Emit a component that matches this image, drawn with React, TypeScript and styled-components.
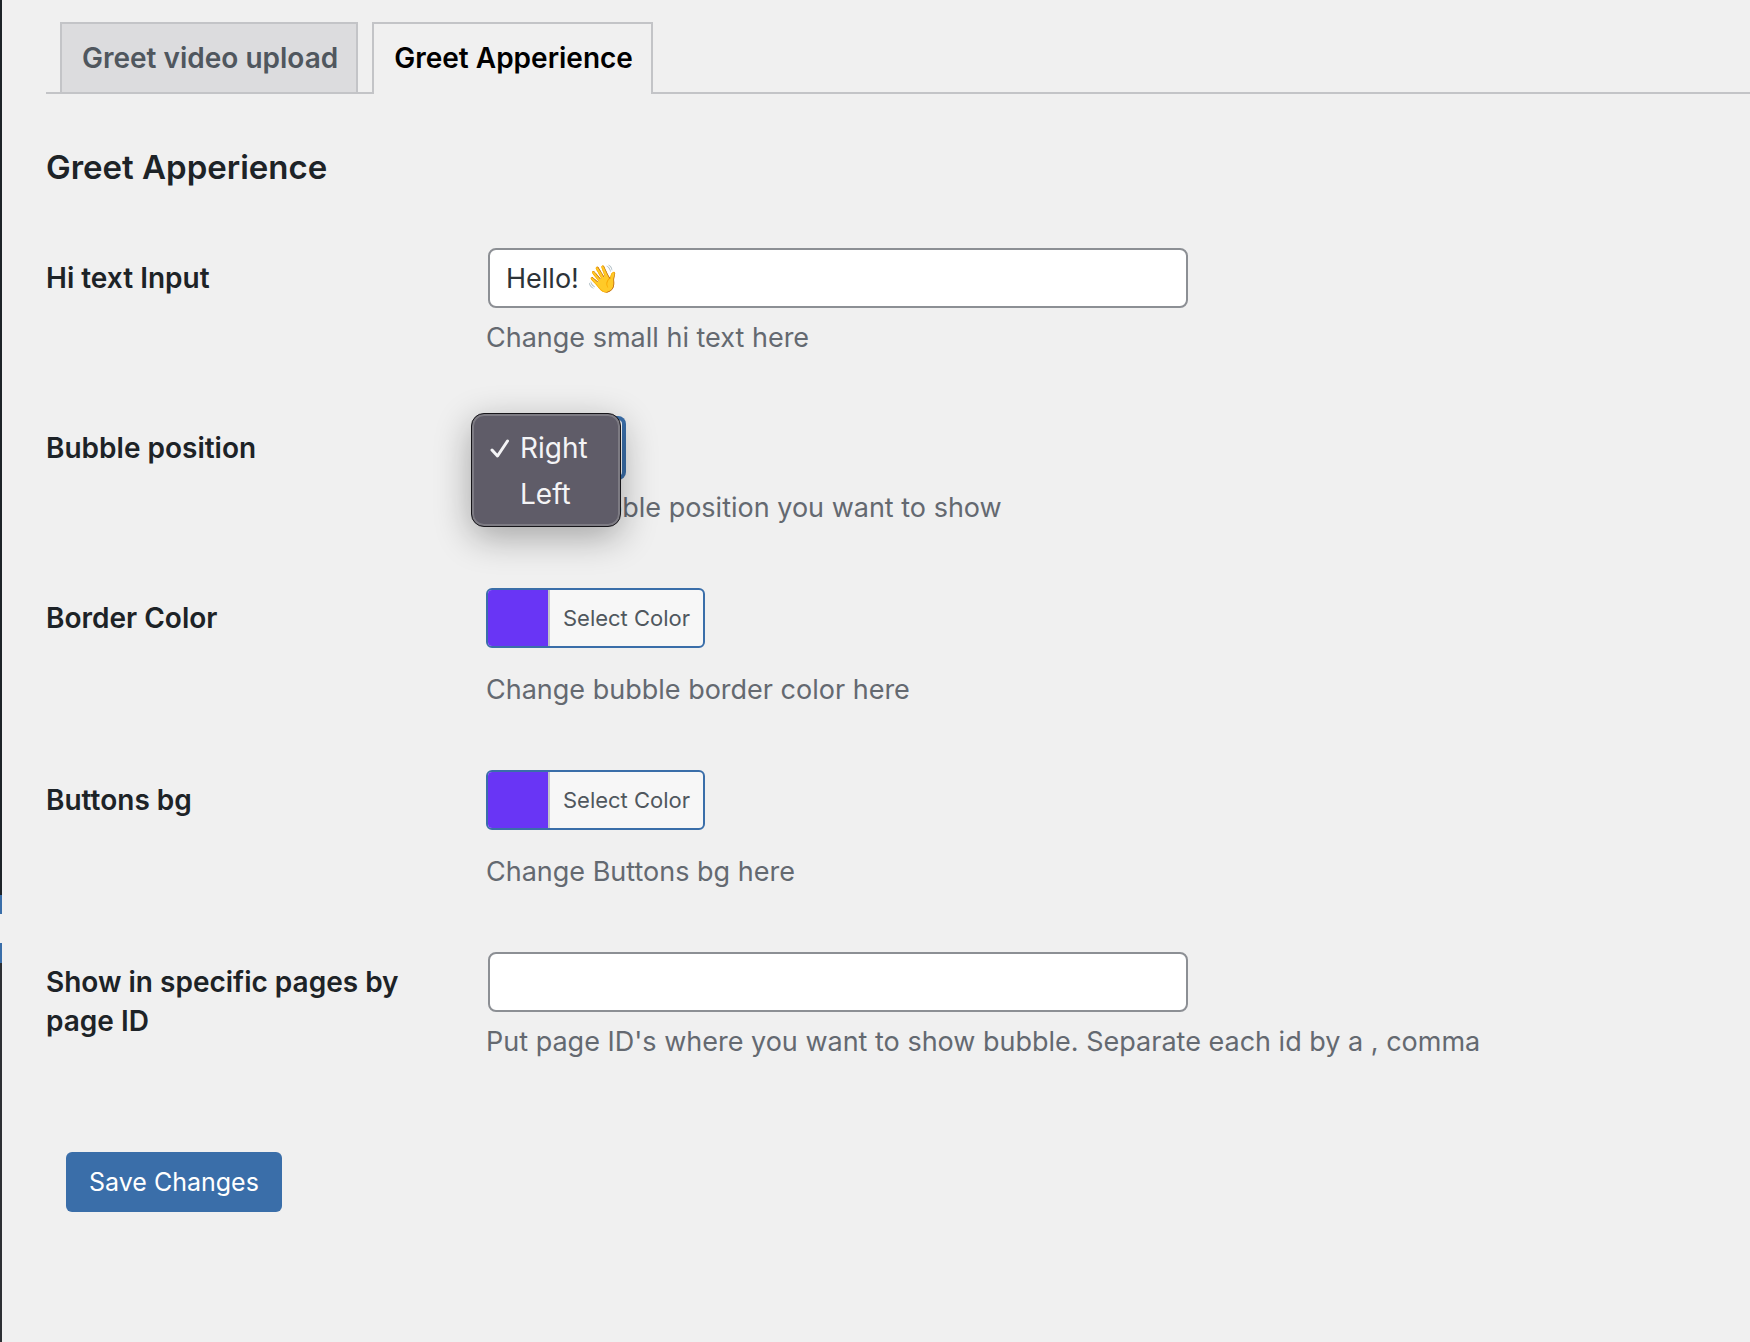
import React, { useState } from "react";
import styled, { createGlobalStyle, css } from "styled-components";

const GlobalStyle = createGlobalStyle`
  *, *::before, *::after { box-sizing: border-box; }
  body {
    margin: 0;
    background: #f0f0f0;
    color: #1d2327;
    font-family: Inter, "Liberation Sans", sans-serif;
    font-size: 27px;
    line-height: 39px;
  }
  input, select, button { font: inherit; }
`;

const Shell = styled.div`
  display: flex;
  min-height: 100vh;
`;

const MenuEdge = styled.div`
  display: grid;
  flex: none;
  width: 2px;
  grid-template-rows: 895px 19px 29px 20px 1fr;
`;

const EdgePart = styled.span<{ $tone: string }>`
  background: ${(p) => p.$tone};
`;

const Content = styled.main`
  flex: 1;
  min-width: 0;
  padding: 22px 0 40px 44px;
`;

const Tabs = styled.nav`
  display: flex;
  gap: 14px;
  padding-left: 14px;
  border-bottom: 2px solid #c3c4c7;
`;

const Tab = styled.a<{ $active?: boolean }>`
  padding: 10px 18px 10px 20px;
  border: 2px solid #c3c4c7;
  border-bottom: 0;
  background: #dcdcde;
  color: #50575e;
  font-size: 28px;
  font-weight: 600;
  line-height: 48px;
  text-decoration: none;
  ${(p) =>
    p.$active &&
    css`
      margin-bottom: -2px;
      padding-bottom: 12px;
      background: #f0f0f0;
      color: #000;
    `}
`;

const Title = styled.h2`
  margin: 50px 0 26px;
  font-size: 33px;
  font-weight: 600;
  line-height: 46px;
`;

const Row = styled.div`
  display: grid;
  grid-template-columns: 400px minmax(0, 1fr);
  column-gap: 40px;
  padding: 30px 20px 27px 0;
`;

const Label = styled.label`
  padding: 13px 20px 0 0;
  font-size: 28px;
  font-weight: 600;
`;

const TextInput = styled.input`
  display: block;
  width: 700px;
  max-width: 100%;
  height: 60px;
  margin: 2px;
  padding: 0 16px;
  border: 2px solid #8c8f94;
  border-radius: 8px;
  background: #fff;
  color: #2c3338;
  outline: none;
`;

const Help = styled.p<{ $spaced?: boolean }>`
  margin: ${(p) => (p.$spaced ? 21 : 9)}px 0 0;
  color: #646970;
  line-height: 42px;
`;

const SelectWrap = styled.div`
  position: relative;
  width: max-content;
`;

const Select = styled.select`
  display: block;
  width: 136px;
  height: 60px;
  margin: 2px;
  padding: 0 16px;
  appearance: none;
  border: 2px solid #3a6ea9;
  border-radius: 6px;
  background: #fff;
  box-shadow: 0 0 0 2px #3a6ea9;
  color: #2c3338;
  outline: none;
`;

const Menu = styled.div`
  position: absolute;
  top: -5px;
  left: -15px;
  width: 150px;
  padding: 11px 6px 9px;
  border: 1px solid #17161a;
  border-radius: 13px;
  background: #5f5c68;
  box-shadow: inset 0 0 0 2px #7d7b83, 0 10px 36px rgba(0, 0, 0, 0.32);
`;

const Option = styled.button`
  display: grid;
  grid-template-columns: 30px 1fr;
  align-items: center;
  width: 100%;
  height: 46px;
  padding: 0 0 0 12px;
  border: 0;
  background: none;
  color: #f4f4f6;
  font-size: 28px;
  text-align: left;
`;

const Check = styled.svg`
  width: 20px;
  height: 22px;
`;

const ColorButton = styled.button`
  display: flex;
  width: 219px;
  height: 60px;
  margin-top: 2px;
  padding: 0;
  overflow: hidden;
  border: 2px solid #3a6ea9;
  border-radius: 6px;
  background: #f7f7f7;
  color: #50575e;
  font-size: 22px;
  line-height: 56px;
`;

const Swatch = styled.span`
  flex: none;
  width: 60px;
  background: #6935f5;
`;

const ColorText = styled.span`
  flex: 1;
  border-left: 2px solid #c3c4c7;
  text-align: center;
`;

const Save = styled.button`
  height: 60px;
  margin: 62px 0 0 20px;
  padding: 0 23px;
  border: 0;
  border-radius: 6px;
  background: #3a6ea9;
  color: #fff;
  font-size: 25px;
`;

const positions = ["Right", "Left"];

function ColorRow({ id, label, help }: { id: string; label: string; help: string }) {
  return (
    <Row>
      <Label htmlFor={id}>{label}</Label>
      <div>
        <ColorButton id={id} type="button">
          <Swatch />
          <ColorText>Select Color</ColorText>
        </ColorButton>
        <Help $spaced>{help}</Help>
      </div>
    </Row>
  );
}

export default function App() {
  const [position, setPosition] = useState("Right");
  return (
    <>
      <GlobalStyle />
      <Shell>
        <MenuEdge>
          <EdgePart $tone="#1d2327" />
          <EdgePart $tone="#3a6ea9" />
          <EdgePart $tone="#f0f0f0" />
          <EdgePart $tone="#3a6ea9" />
          <EdgePart $tone="#2c2f33" />
        </MenuEdge>
        <Content>
          <Tabs>
            <Tab href="#upload">Greet video upload</Tab>
            <Tab href="#appearance" $active>Greet Apperience</Tab>
          </Tabs>
          <form onSubmit={(e) => e.preventDefault()}>
            <Title>Greet Apperience</Title>
            <Row>
              <Label htmlFor="hi">Hi text Input</Label>
              <div>
                <TextInput id="hi" type="text" defaultValue="Hello! 👋" />
                <Help>Change small hi text here</Help>
              </div>
            </Row>
            <Row>
              <Label htmlFor="position">Bubble position</Label>
              <div>
                <SelectWrap>
                  <Select id="position" value={position} onChange={(e) => setPosition(e.target.value)}>
                    {positions.map((p) => <option key={p}>{p}</option>)}
                  </Select>
                  <Menu role="listbox" aria-label="Bubble position">
                    {positions.map((p) => (
                      <Option key={p} type="button" role="option" aria-selected={p === position} onClick={() => setPosition(p)}>
                        {p === position ? (
                          <Check viewBox="0 0 20 22" fill="none" stroke="currentColor" strokeWidth="3" strokeLinecap="round" strokeLinejoin="round">
                            <path d="M2 13 7.5 19 17.5 4" />
                          </Check>
                        ) : <span />}
                        {p}
                      </Option>
                    ))}
                  </Menu>
                </SelectWrap>
                <Help>Select bubble position you want to show</Help>
              </div>
            </Row>
            <ColorRow id="border-color" label="Border Color" help="Change bubble border color here" />
            <ColorRow id="buttons-bg" label="Buttons bg" help="Change Buttons bg here" />
            <Row>
              <Label htmlFor="pages">Show in specific pages by page ID</Label>
              <div>
                <TextInput id="pages" type="text" />
                <Help>Put page ID's where you want to show bubble. Separate each id by a , comma</Help>
              </div>
            </Row>
            <Save type="submit">Save Changes</Save>
          </form>
        </Content>
      </Shell>
    </>
  );
}
